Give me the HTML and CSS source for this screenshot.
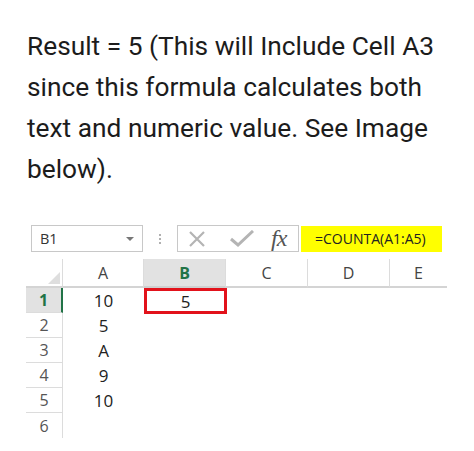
FILE: index.html
```html
<!DOCTYPE html>
<html>
<head>
<meta charset="utf-8">
<link rel="stylesheet" href="styles.css">
</head>
<body>
<p class="intro">Result = 5 (This will Include Cell A3 since this formula calculates both text and numeric value. See Image below).</p>
<div class="sheet">
  <div class="toolbar">
    <div class="namebox"><span>B1</span><span class="caret"></span></div>
    <div class="dots"><i></i><i></i><i></i></div>
    <div class="fxbox">
      <svg class="ico" width="18" height="16" viewBox="0 0 18 16"><path d="M2 1 L16 15 M16 1 L2 15" stroke="#b4b4b4" stroke-width="2.2" fill="none"/></svg>
      <svg class="ico chk" width="24" height="17" viewBox="0 0 24 17"><path d="M1 9 L8 15 L23 1" stroke="#b4b4b4" stroke-width="3" fill="none"/></svg>
      <span class="fx">fx</span>
    </div>
    <div class="formula">=COUNTA(A1:A5)</div>
  </div>
  <div class="grid">
    <div class="corner"><span class="tri"></span></div>
    <div class="colh">A</div>
    <div class="colh sel">B</div>
    <div class="colh">C</div>
    <div class="colh">D</div>
    <div class="colh last">E</div>

    <div class="rowh sel">1</div>
    <div class="cell">10</div>
    <div class="cell active">5</div>
    <div class="cell"></div><div class="cell"></div><div class="cell"></div>

    <div class="rowh">2</div>
    <div class="cell">5</div>
    <div class="cell"></div><div class="cell"></div><div class="cell"></div><div class="cell"></div>

    <div class="rowh">3</div>
    <div class="cell">A</div>
    <div class="cell"></div><div class="cell"></div><div class="cell"></div><div class="cell"></div>

    <div class="rowh">4</div>
    <div class="cell">9</div>
    <div class="cell"></div><div class="cell"></div><div class="cell"></div><div class="cell"></div>

    <div class="rowh">5</div>
    <div class="cell">10</div>
    <div class="cell"></div><div class="cell"></div><div class="cell"></div><div class="cell"></div>

    <div class="rowh lastrow">6</div>
    <div class="cell"></div>
    <div class="cell"></div><div class="cell"></div><div class="cell"></div><div class="cell"></div>
  </div>
</div>
</body>
</html>
```
FILE: styles.css
```css
html, body {
  margin: 0;
  padding: 0;
  background: #ffffff;
}

.intro {
  margin: 0;
  padding: 26px 30px 0 27px;
  font-family: Roboto, "Noto Sans", sans-serif;
  font-size: 26.3px;
  line-height: 41px;
  color: #1c1c1c;
}

.sheet {
  margin: 35px 0 0 26px;
  width: 421px;
  font-family: "Open Sans", "Liberation Sans", sans-serif;
}

.toolbar {
  display: flex;
  align-items: center;
  height: 27px;
}

.namebox {
  margin-left: 5px;
  width: 112px;
  height: 27px;
  box-sizing: border-box;
  border: 1px solid #c8c8c8;
  display: flex;
  align-items: center;
  justify-content: space-between;
  padding: 0 8px 0 8px;
  font-size: 14.5px;
  color: #333;
}

.caret {
  width: 0;
  height: 0;
  border-left: 4px solid transparent;
  border-right: 4px solid transparent;
  border-top: 4px solid #777;
  margin-top: 1px;
}

.dots {
  width: 34px;
  display: flex;
  flex-direction: column;
  align-items: center;
  gap: 2px;
}

.dots i {
  display: block;
  width: 2px;
  height: 2px;
  background: #b0b0b0;
}

.fxbox {
  width: 122px;
  height: 27px;
  box-sizing: border-box;
  border: 1px solid #c8c8c8;
  display: flex;
  align-items: center;
  padding-left: 10px;
}

.chk {
  margin-left: 24px;
}

.fx {
  margin-left: 17px;
  font-family: "Liberation Serif", "DejaVu Serif", serif;
  font-style: italic;
  font-size: 24px;
  color: #555;
  letter-spacing: -1px;
  line-height: 1;
  margin-top: -2px;
}

.formula {
  margin-left: 2px;
  width: 141px;
  height: 26px;
  background: #ffff00;
  font-size: 14px;
  color: #222;
  display: flex;
  align-items: center;
  padding-left: 14px;
  box-sizing: border-box;
  white-space: nowrap;
}

.grid {
  margin-top: 7px;
  display: grid;
  grid-template-columns: 37px 81px 82px 82px 82px 57px;
  grid-template-rows: 29px repeat(6, 25px);
}

.corner {
  position: relative;
  border-bottom: 2px solid #d4d4d4;
  border-right: 1px solid #dcdcdc;
}

.tri {
  position: absolute;
  right: 2px;
  bottom: 2px;
  width: 0;
  height: 0;
  border-left: 12px solid transparent;
  border-bottom: 12px solid #dedede;
}

.colh {
  border-bottom: 2px solid #d4d4d4;
  border-right: 1px solid #dcdcdc;
  display: flex;
  align-items: center;
  justify-content: center;
  font-size: 16px;
  color: #444;
}

.colh.sel {
  background: #e2e2e2;
  color: #217346;
  font-weight: bold;
  border-bottom-color: #cfcfcf;
}

.colh.last {
  border-right: none;
}

.rowh {
  border-bottom: 1px solid #dcdcdc;
  border-right: 1px solid #dcdcdc;
  display: flex;
  align-items: center;
  justify-content: center;
  font-size: 16px;
  color: #555;
}

.rowh.sel {
  background: #e2e2e2;
  color: #217346;
  font-weight: bold;
  border-right: 2px solid #217346;
}

.rowh.lastrow {
  border-bottom: none;
}

.cell {
  display: flex;
  align-items: center;
  justify-content: center;
  font-size: 17px;
  color: #222;
}

.cell.active {
  position: relative;
  border: 3px solid #e2121b;
  margin: 0 -1px -1px 0;
}
```
